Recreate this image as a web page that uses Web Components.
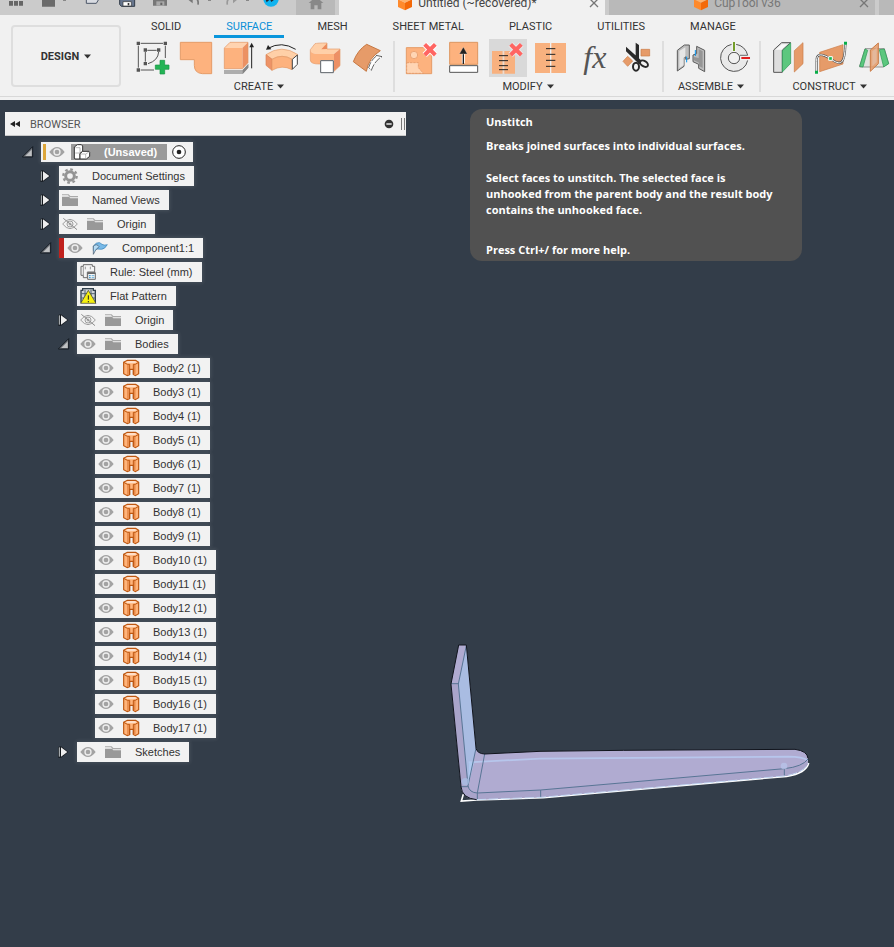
<!DOCTYPE html>
<html lang="en">
<head>
<meta charset="utf-8">
<title>Untitled (~recovered)*</title>
<style>
html,body{height:100%;margin:0}
body{font-family:Roboto,"Liberation Sans",sans-serif;font-size:11px;color:#333;background:#333d49}
</style>
</head>
<body>
<cad-app></cad-app>
<script>
const ICONS = {
  sketch: ['12 15 114 114', `<g fill="none" stroke="#555" stroke-width="3"><path d="M32 28H99M25 35V101M106 35V72M32 108H72M52 49H80M46 54V83M86 54Q84 80 54 89"/></g><g fill="#555"><path d="M20 23h10v10H20zM101 23h10v10h-10zM20 103h10v10H20zM41 43h10v10H41zM81 43h10v10H81zM41 84h10v10H41z"/></g><path d="M90 79h14v14h13v13h-13v14H90v-14H76V93h14z" fill="#23b455" stroke="#169443" stroke-width="2"/>`],
  patch: ['141 15 114 114', `<path d="M151 25H245V119H217Q193 117 193 94V77H151z" fill="#fdb27e" stroke="#e59c68" stroke-width="3"/>`],
  extrude: ['270 15 114 114', `<path d="M282 108H338L355 90V101L338 120H282z" fill="#aeaeae"/><path d="M338 108L355 90V101L338 120z" fill="#858585"/><path d="M283 42L300 25H354L337 42z" fill="#ffd3b0"/><path d="M337 42L354 25V86L337 104z" fill="#ec9163"/><path d="M283 42H337V104H283z" fill="#fdb27e"/><path d="M283 42L300 25H354V86L337 104H283z" fill="none" stroke="#e0935f" stroke-width="2"/><path d="M365 35V103" stroke="#222" stroke-width="3"/><path d="M365 26L358 40H372z" fill="#222"/>`],
  revolve: ['9 15 114 114', `<path d="M18 62Q65 29 114 62L97 76Q66 58 36 76z" fill="#ffd0a8" stroke="#e39a68" stroke-width="2"/><path d="M18 62L36 76V109L18 94z" fill="#ed9367" stroke="#d98152" stroke-width="2"/><path d="M36 76Q66 58 96 76V107Q66 91 36 109z" fill="#fdb27e" stroke="#e39a68" stroke-width="2"/><path d="M97 76L112 63V91L97 106z" fill="#fff" stroke="#444" stroke-width="3"/><path d="M24 43Q65 20 107 46" fill="none" stroke="#222" stroke-width="3"/><path d="M18 47L24 33L34 46z" fill="#222"/>`],
  loft: ['138 15 114 114', `<path d="M151 47L165 29Q171 27 201 27V45H240L222 60H177Q151 60 151 47z" fill="#ffd0a8"/><path d="M151 48Q151 60 177 60H222V79H181V90Q151 91 151 78z" fill="#fdb27e"/><path d="M184 46L201 28V45z" fill="#ec8a5b"/><path d="M222 60L240 45V95L222 112z" fill="#ed9065"/><path d="M151 47L165 29Q171 27 201 27V45H240V95L222 112M151 47V78Q151 91 181 90" fill="none" stroke="#e69a68" stroke-width="2"/><path d="M182 80H220V116H182z" fill="#fff" stroke="#5b6066" stroke-width="3"/>`],
  offset: ['267 15 114 114', `<path d="M341 66L366 69Q344 82 334 109L321 101Q328 80 341 66z" fill="#fff"/><path d="M320 31L361 50Q326 72 319 112L280 83Q293 48 320 31z" fill="#e69b69" stroke="#c67843" stroke-width="3"/><path d="M348 64L366 68Q344 80 334 109L326 101Q332 79 349 66" fill="#fff" stroke="#444" stroke-width="2.5" stroke-dasharray="22 4"/>`],
  trim: ['9 15 114 114', `<path d="M19 41H95V119H19z" fill="#fdb27e" stroke="#e59c68" stroke-width="3"/><path d="M20 86H55V101L70 118H20z" fill="#ffd5b4" stroke="#df9360" stroke-width="2" stroke-dasharray="7 3"/><circle cx="42" cy="63" r="11" fill="#ffd5b4" stroke="#df9360" stroke-width="2"/><path d="M74 31L106 63M106 31L74 63" stroke="#fff" stroke-width="18"/><path d="M74 31L106 63M106 31L74 63" stroke="#ff6562" stroke-width="12"/>`],
  extend: ['138 15 114 114', `<path d="M149 25H233V91H149z" fill="#fdb27e" stroke="#dd965f" stroke-width="3"/><path d="M190 52V88" stroke="#fff" stroke-width="9"/><path d="M190 55V90" stroke="#222" stroke-width="4"/><path d="M190 39L178 60H202z" fill="#222" stroke="#ffe2cc"/><path d="M149 95H233V115H149z" fill="#fff" stroke="#555" stroke-width="3"/>`],
  unstitch: ['267 15 114 114', `<path d="M276 51H308V119H276zM313 51H345V119H313z" fill="#f8b17f"/><path d="M310 51V119" stroke="#f7ddc9" stroke-width="3"/><path d="M297 65H324M297 80H324M297 95H324M297 107H324" stroke="#222" stroke-width="3"/><path d="M332 31L364 63M364 31L332 63" stroke="#e9e9e9" stroke-width="18"/><path d="M332 31L364 63M364 31L332 63" stroke="#ff6562" stroke-width="12"/>`],
  stitch: ['6 15 114 114', `<path d="M15 27H60V117H15zM64 27H108V117H64z" fill="#f8b17f"/><path d="M48 44H76M48 61H76M48 79H76M48 97H76" stroke="#222" stroke-width="3"/>`],
  fx: ['135 15 114 114', `<text x="160" y="102" font-family="Liberation Serif" font-style="italic" font-size="96" fill="#555">fx</text>`],
  cut: ['264 15 114 114', `<path d="M333 46H359V66H333zM279 82L293 67L308 81L293 97z" fill="#e69b69" stroke="#ca7c47" stroke-width="2"/><path d="M288 38L330 76L336 84L328 91L288 52zM317 26L327 33V81H317z" fill="#2a2a2a"/><g fill="#f3f3f3" stroke="#2a2a2a" stroke-width="6"><ellipse cx="318" cy="98" rx="9" ry="12"/><ellipse cx="342" cy="89" rx="13" ry="8" transform="rotate(32 342 89)"/></g>`],
  joint: ['234 117 114 114', `<g stroke="#5b5b5b" stroke-width="3" stroke-linejoin="round"><path d="M250 151L271 135H286V176L275 178V170L270 172V199L250 213z" fill="#bdbdbd"/><path d="M256 153L274 142V170L269 173V196L256 204z" fill="#e6e6e6" stroke="none"/><path d="M308 139L332 151V215L314 205V193L297 185V165L308 161z" fill="#bdbdbd"/><path d="M314 147L326 154V204L315 198V188L300 181V171L314 174z" fill="#969696" stroke="none"/></g><path d="M278 170V187M304 150V168" stroke="#0793ed" stroke-width="3"/>`],
  asbuilt: ['363 117 114 114', `<circle cx="420" cy="174" r="29" fill="none" stroke="#e9e9e9" stroke-width="24"/><g fill="none" stroke="#555" stroke-width="3"><circle cx="420" cy="174" r="17"/><path d="M426 133A41 41 0 0 1 461 166H438M461 181A41 41 0 1 1 413 133"/></g><path d="M420 122V156" stroke="#f1f1f1" stroke-width="13"/><path d="M420 126V153" stroke="#749d2a" stroke-width="6"/><path d="M438 174H469" stroke="#f1f1f1" stroke-width="13"/><path d="M442 174H468" stroke="#e02020" stroke-width="6"/>`],
  plane: ['525 117 114 114', `<path d="M539 150L563 128H590L565 150V217H539z" fill="#dedede" stroke="#555" stroke-width="3"/><path d="M545 149L563 133H580L563 149z" fill="#fafafa"/><path d="M565 152L590 129V190L565 216z" fill="#5cc77e" stroke="#269653" stroke-width="2"/><path d="M601 152L627 128V191L601 216z" fill="#e69b69" stroke="#c97a45" stroke-width="2"/>`],
  planepath: ['654 117 114 114', `<path d="M677 157L747 134V192L677 215z" fill="#e69b69" stroke="#cb7b47" stroke-width="2"/><path d="M668 215V184C666 159 684 160 709 176C740 198 752 195 754 134" fill="none" stroke="#555" stroke-width="7"/><path d="M668 215V184C666 159 684 160 709 176C740 198 752 195 754 134" fill="none" stroke="#fff" stroke-width="3"/><path d="M663 212h9v9h-9zM750 125h9v9h-9z" fill="#08ad48"/><path d="M704 170h11v11h-11z" fill="#14b852" stroke="#fff" stroke-width="3"/>`],
  midplane: ['783 117 114 114', `<path d="M797 198L813 146H871L884 191L867 201H797z" fill="#e1e3df" stroke="#666" stroke-width="2"/><path d="M797 199L813 147L821 151L807 201zM856 149L871 147L884 191L869 201z" fill="#5cc77e" stroke="#259952" stroke-width="2"/><path d="M829 150L853 129V191L829 214z" fill="#e69b69" fill-opacity=".85" stroke="#ca7c47" stroke-width="3"/><path d="M835 154L848 143V186L835 199z" fill="#e2c1aa" fill-opacity=".7"/>`],
  eye: ['198 27 54 54', `<path d="M202 54Q225 24 248 54Q225 84 202 54z" fill="#a3a3a3"/><circle cx="225" cy="54" r="9" fill="none" stroke="#eee" stroke-width="4"/>`],
  eyeoff: ['183 333 54 54', `<g fill="none" stroke="#8e8e8e" stroke-width="2.5"><path d="M188 360Q210 332 232 360Q210 388 188 360z"/><circle cx="210" cy="360" r="9"/><circle cx="210" cy="360" r="3"/><path d="M190 343L231 377" stroke-width="3"/></g>`],
  folder: ['183 262 54 54', `<path d="M186 272H206L211 277H234V281H209L204 275H186z" fill="#aaa"/><path d="M186 279H207L211 284H234V307H186z" fill="#999"/>`],
  gear: ['183 189 54 54', `<circle cx="210" cy="216" r="13" fill="none" stroke="#949494" stroke-width="9"/><circle cx="210" cy="216" r="20" fill="none" stroke="#949494" stroke-width="7" stroke-dasharray="8 7.7"/>`],
  cubes: ['219 117 54 54', `<g fill="#fff" stroke="#333" stroke-width="3" stroke-linejoin="round"><path d="M223 129L232 122H244L248 126V142L240 148V165H225L223 162z"/><path d="M240 149L248 142H267L269 145V157L259 165H240z"/></g><path d="M226 131H240V146M226 147H240M242 150H257V163M258 149L266 145" stroke="#999" fill="none" stroke-width="2"/>`],
  flag: ['270 27 54 54', `<path d="M277 48Q286 36 296 38L303 43Q309 47 319 44Q311 58 301 58Q289 54 277 62z" fill="#78b9e7" stroke="#3780b5" stroke-width="2"/><path d="M277 48Q288 40 294 50L284 60L277 73z" fill="#b5dcf5" stroke="#3f5366" stroke-width="2"/>`],
  rule: ['237 99 54 54', `<g fill="#f4f4f4" stroke="#6c6c6c" stroke-width="3"><path d="M250 109V104H277V109H284V126H262V143H250V136H243V109z"/><path d="M250 110V135M256 110V118M271 110V118" stroke-width="2"/><path d="M263 128H286V148H263z"/></g><path d="M263 130H286" stroke="#666" stroke-width="4"/><path d="M267 137H272M267 143H272" stroke="#248ecc" stroke-width="3"/><path d="M275 137H283M275 143H283" stroke="#248ecc" stroke-width="2"/>`],
  flat: ['237 171 54 54', `<path d="M248 176H280V181H286V216H243V181H248z" fill="#cdd2d6" stroke="#31404c" stroke-width="4"/><path d="M243 191H286M243 204H286M255 179V213M273 179V213" stroke="#536473" stroke-width="3"/><path d="M265 181L288 220H242z" fill="#f4ef10" stroke="#333" stroke-width="2"/><path d="M265 196V209M265 213V217" stroke="#222" stroke-width="3"/>`],
  body: ['366 387 54 54', `<path d="M371 397L382 391H407L416 397V431L406 437L400 433V418H389V434L382 437L371 431z" fill="#ffb47a" stroke="#bd5711" stroke-width="3.5"/><path d="M384 404V435M404 404V435" stroke="#e88a49" stroke-width="5"/><path d="M371 397L382 403H389V434M416 397L406 403H400V433" fill="none" stroke="#bd5711" stroke-width="3"/><path d="M376 397L384 393H404L411 397L403 400H384z" fill="#ffdfc8"/>`],
  open: ['66 126 36 36', `<path d="M98 128V159H67z" fill="#777b80" stroke="#121820" stroke-width="3"/><path d="M95 137V156H76z" fill="#bfc1c3"/>`],
  closed: ['120 199 36 36', `<path d="M121 202L129 200L151 217L129 234H121z" fill="#15191e"/><path d="M129 203L148 217L129 231z" fill="#eee"/><path d="M124 203V231" stroke="#c2c7cb" stroke-width="3"/>`],
  target: ['0 0 54 54', `<circle cx="27" cy="27" r="19" fill="#fff" stroke="#222" stroke-width="3"/><circle cx="27" cy="27" r="7" fill="#222"/>`],
  rewind: ['0 0 36 36', `<path d="M18 9V27L3 18zM33 9V27L18 18z" fill="#222"/>`],
  minus: ['0 0 36 36', `<circle cx="18" cy="18" r="13" fill="#333"/><path d="M10 18H26" stroke="#fff" stroke-width="4"/>`],
  caret: ['0 0 18 18', `<path d="M0 4H18L9 14z" fill="#333"/>`],
  cube: ['0 0 48 48', `<path d="M3 13L24 3L45 13L24 23z" fill="#ffb36e"/><path d="M3 13L24 23V46L3 36z" fill="#ff8a2c"/><path d="M24 23L45 13V36L24 46z" fill="#f46908"/>`],
  close: ['0 0 30 30', `<path d="M3 3L27 27M27 3L3 27" stroke="#777" stroke-width="4"/>`],
  house: ['0 0 48 48', `<path d="M24 5L2 24H8V43H19V31H29V43H40V24H46z" fill="#888"/>`],
  apps: ['15 -45 66 66', `<path d="M27-12h12v12H27zM42-12h12v12H42zM57-12h12v12H57zM27 3h12v14H27zM42 3h12v14H42zM57 3h12v14H57z" fill="#666"/>`],
  file: ['111 -45 66 66', `<path d="M126-20H152L165-8V20H126z" fill="#6b6b6b"/>`],
  folderopen: ['249 -45 66 66', `<path d="M259-25H279L285-18H296V-7M259-25V10H289L301-10H272z" fill="#d9dce2" stroke="#4c5768" stroke-width="3"/>`],
  save: ['348 -45 66 66', `<path d="M359-25H397L404-18V19H364L359 13z" fill="#66758d" stroke="#323c49" stroke-width="3"/><path d="M369 5H394V18H369z" fill="#fff" stroke="#333" stroke-width="2"/><path d="M383 9H388V16H383z" fill="#333"/><path d="M368-20H394V-2H368z" fill="#d6dbe2"/>`],
  saveoff: ['447 -45 66 66', `<path d="M459-25H495L501-18V17H459z" fill="#777"/><path d="M469 4H493V17H469z" fill="#aaa"/><path d="M481 8H487V15H481z" fill="#666"/>`],
  undo: ['546 -45 66 66', `<path d="M568-4Q598-12 594 14" fill="none" stroke="#777" stroke-width="5"/><path d="M562-3L578-14V10z" fill="#777"/>`],
  redo: ['660 -45 66 66', `<path d="M708-4Q678-12 682 14" fill="none" stroke="#999" stroke-width="5"/><path d="M714-3L699-14V10z" fill="#999"/>`],
  ext: ['780 -45 66 66', `<circle cx="813" cy="-3" r="23" fill="#11b3ef"/><path d="M795-6L800 7L810-2L814 6L832-8z" fill="#252b33"/>`]
};
const icon = (n, s = 18) => { const [v, b] = ICONS[n]; return `<svg width="${s}" height="${s}" viewBox="${v}" aria-hidden="true">${b}</svg>`; };
const RESET = `*{box-sizing:border-box}svg{display:block;flex:none}button{font:inherit;color:inherit;background:none;border:0;padding:0;margin:0;cursor:pointer;white-space:nowrap}`;
const define = (name, css, html) => customElements.define(name, class extends HTMLElement {
  constructor() {
    super();
    this.attachShadow({ mode: 'open' }).innerHTML = `<style>${RESET}${css}</style>` + (typeof html === 'function' ? html(this) : html);
  }
});

define('quick-bar', `:host{display:grid;grid-template-columns:32px 46px 33px 33px 33px 38px 40px 22px;padding:0 0 8px 5px;width:296px;flex:none;align-items:end}
  button{display:flex;align-items:end;height:22px}i{width:3px;height:2px;background:#888;margin:0 0 6px 4px}`,
  [['apps','Data panel'],['file','File',1],['folderopen','Open'],['save','Save'],['saveoff','Save as'],['undo','Undo',1],['redo','Redo',1],['ext','Extensions']]
    .map(([n, l, c]) => `<button aria-label="${l}">${icon(n, 22)}${c ? '<i></i>' : ''}</button>`).join(''));

define('doc-tab', `:host{display:flex;flex:0 0 266px;align-items:center;height:24px;padding:0 6px;font-size:12px;line-height:24px;background:#b9b9b9;color:#777}
  :host([active]){background:#f1f1f1;color:#444}.title{flex:1;display:flex;justify-content:center;align-items:center;gap:5px;white-space:nowrap}`,
  `<div class="title">${icon('cube', 16)}<span><slot></slot></span></div><button aria-label="Close tab">${icon('close', 10)}</button>`);

define('tab-strip', `:host{display:flex;height:15px;overflow:hidden;align-items:flex-end;background:#cbcbcb;gap:4px}
  .home{flex:none;width:39px;height:24px;background:#b9b9b9;display:grid;place-items:center;margin-left:-4px}
  .rest{flex:1;height:24px;background:#b9b9b9}`,
  `<quick-bar></quick-bar><button class="home" aria-label="Home">${icon('house', 16)}</button><doc-tab active>Untitled (~recovered)*</doc-tab><doc-tab>CupTool v36</doc-tab><div class="rest"></div>`);

define('ribbon-tab', `:host{display:block}button{display:block;padding:0 12px;height:23px;line-height:23px;border-bottom:3px solid transparent}
  :host([active]) button{color:#0a8fd8;border-color:#0a96dc}`, `<button role="tab"><slot></slot></button>`);

define('tool-button', `:host{display:block}button{display:block;width:38px;height:38px}:host([active]) button{background:#d9d9d9}`,
  el => `<button aria-label="${el.getAttribute('icon')}">${icon(el.getAttribute('icon'), 38)}</button>`);

define('tool-group', `:host{display:flex;flex:none;flex-direction:column;padding:0 6px 0 8px;position:relative}
  .tools{display:flex;gap:5px}.label{align-self:center;display:flex;align-items:center;gap:4px;height:18px;padding-right:3px}
  :host(:not([last]))::after{content:"";position:absolute;right:-2px;top:2px;height:51px;width:2px;background:#dedede}:host(:not([last])){margin-right:2px}`,
  el => `<div class="tools"><slot></slot></div><button class="label">${el.getAttribute('label')}${icon('caret', 7)}</button>`);

const group = (label, tools, last = '') => `<tool-group label="${label}" ${last}>${tools.map(t => `<tool-button icon="${t}" ${t === 'unstitch' ? 'active' : ''}></tool-button>`).join('')}</tool-group>`;
define('tool-ribbon', `:host{display:flex;height:85px;background:#f1f1f1;overflow:hidden;position:relative}
  :host::after{content:"";position:absolute;left:0;right:0;bottom:3px;height:1px;background:#d8d8d8}
  .design{flex:none;width:110px;height:62px;margin:10px 5px 0 11px;border:2px solid #dedede;border-radius:4px;font-weight:700;display:flex;justify-content:center;align-items:center;gap:5px;color:#333}
  .tabs{display:flex;gap:21px;padding-left:13px;height:24px}.groups{display:flex}`,
  `<button class="design">DESIGN${icon('caret', 7)}</button><div><div class="tabs" role="tablist">
  ${['SOLID','SURFACE','MESH','SHEET METAL','PLASTIC','UTILITIES','MANAGE'].map(t => `<ribbon-tab ${t === 'SURFACE' ? 'active' : ''}>${t}</ribbon-tab>`).join('')}</div><div class="groups">
  ${group('CREATE', ['sketch','patch','extrude','revolve','loft','offset'])}${group('MODIFY', ['trim','extend','unstitch','stitch','fx','cut'])}${group('ASSEMBLE', ['joint','asbuilt'])}${group('CONSTRUCT', ['plane','planepath','midplane'], 'last')}</div></div>`);

define('tree-row', `:host{display:flex;align-items:center;height:20px;width:max-content}
  .exp{width:12px;margin-right:7px}.pill{display:flex;align-items:center;height:20px;background:#f2f2f2;padding:0 9px 0 2px;box-shadow:0 0 4px 1px #ffffff1c;white-space:nowrap}
  .bar{width:5px;height:20px;margin-left:-2px;margin-right:2px}.eye{margin-right:7px}.name{margin-left:13px;color:#333}
  .root{display:flex;align-items:center;height:16px;background:#999;padding:0 10px 0 2px;margin:0 3px 0 -2px}.root .name{color:#fff;font-weight:700}
  :host([bar="root"]) .pill{padding-right:5px}:host([bar="root"]) .bar{border:solid #f2f2f2;border-width:2px 0 2px 2px;background:#dda63a}:host([bar="component"]) .bar{background:#c0211d}`,
  el => {
    const a = n => el.getAttribute(n), root = a('bar') === 'root';
    el.style.paddingLeft = `${18 * a('level')}px`;
    const body = `${icon(a('icon'))}<span class="name"><slot></slot></span>`;
    return `${a('exp') ? `<button class="exp" aria-label="Toggle">${icon(a('exp'), 12)}</button>` : '<span class="exp"></span>'}
    <div class="pill">${a('bar') ? '<span class="bar"></span>' : ''}${a('eye') ? `<button class="eye" aria-label="Visibility">${icon(a('eye'))}</button>` : ''}${root ? `<div class="root">${body}</div><button aria-label="Activate">${icon('target')}</button>` : body}</div>`;
  });

const row = (text, level, ic, eye = '', exp = '', bar = '') => `<tree-row level="${level}" icon="${ic}" eye="${eye}" exp="${exp}" bar="${bar}">${text}</tree-row>`;
define('browser-panel', `:host{display:block;width:401px;max-width:100%;font-family:"Liberation Sans",Arial,sans-serif}
  header{display:flex;align-items:center;height:24px;background:#f2f2f2;padding:1px 1px 0 4px;border-bottom:1px solid #c8c8c8;color:#555;font-family:Roboto,sans-serif}
  header span{flex:1;margin-left:9px}.grip{width:4px;height:12px;border:solid #777;border-width:0 1px;margin-left:6px}
  .tree{display:flex;flex-direction:column;gap:4px;padding:6px 0 0 17px}`,
  `<header><button aria-label="Collapse">${icon('rewind', 12)}</button><span>BROWSER</span><button aria-label="Hide">${icon('minus', 12)}</button><div class="grip"></div></header><div class="tree">
  ${row('(Unsaved)', 0, 'cubes', 'eye', 'open', 'root')}${row('Document Settings', 1, 'gear', '', 'closed')}${row('Named Views', 1, 'folder', '', 'closed')}${row('Origin', 1, 'folder', 'eyeoff', 'closed')}
  ${row('Component1:1', 1, 'flag', 'eye', 'open', 'component')}${row('Rule: Steel (mm)', 2, 'rule')}${row('Flat Pattern', 2, 'flat')}${row('Origin', 2, 'folder', 'eyeoff', 'closed')}${row('Bodies', 2, 'folder', 'eye', 'open')}
  ${Array.from({ length: 16 }, (_, i) => row(`Body${i + 2} (1)`, 3, 'body', 'eye')).join('')}${row('Sketches', 2, 'folder', 'eye', 'closed')}</div>`);

define('tool-tip', `:host{position:absolute;left:470px;top:9px;box-sizing:border-box;width:332px;padding:5px 16px 3px;border-radius:12px;background:#515151;color:#fff;font:700 11px/16px "Open Sans","Noto Sans",sans-serif}
  p{margin:0 0 16px}.t{margin-bottom:8px}.b{margin-bottom:24px}.h{margin:0}`,
  `<p class="t">Unstitch</p><p>Breaks joined surfaces into individual surfaces.</p><p class="b">Select faces to unstitch. The selected face is<br>unhooked from the parent body and the result body<br>contains the unhooked face.</p><p class="h">Press Ctrl+/ for more help.</p>`);

define('part-model', `:host{position:absolute;left:440px;top:535px}`,
  `<svg width="380" height="180" viewBox="0 0 1140 540" role="img" aria-label="Sheet metal part">
  <path d="M70 478L64 498L110 495L310 488L1040 424Q1098 415 1106 384" fill="none" stroke="#fff" stroke-width="5"/>
  <path d="M56 30H79L108 340Q112 356 134 357L300 349L550 346L1065 343Q1102 348 1104 370V384Q1098 411 1035 423L305 487L110 494Q66 490 63 455L33 147z" fill="#b0abd1"/>
  <path d="M33 147H55L84 452Q88 473 112 474L302 465L1033 401Q1080 397 1104 372V384Q1098 411 1035 423L305 487L110 494Q66 490 63 455z" fill="#a9a4ca"/>
  <path d="M79 32L108 340L90 425L84 452L55 147z" fill="#a9bce2"/>
  <path d="M86 382L300 371L1045 365Q1088 366 1103 376" fill="none" stroke="#b7c6ec" stroke-width="5"/>
  <path d="M88 380H103L84 452z" fill="#aec9ef"/>
  <g fill="none" stroke="#587595" stroke-width="3"><path d="M79 32L55 147L84 452Q88 473 112 474L302 465L1033 401Q1088 395 1104 372M33 146H55M108 340L84 452M134 357L112 474V494M302 465V487M1033 401V423M63 455H84"/></g>
  <path d="M110 494L305 487L1035 423Q1098 411 1104 384" fill="none" stroke="#c7dcf5" stroke-width="3" stroke-dasharray="28 8"/>
  <path d="M110 494Q66 490 63 455L33 147L56 30H79L108 340Q112 356 134 357L300 349L550 346L1065 343Q1102 348 1104 370" fill="none" stroke="#10141c" stroke-width="3"/>
  <circle cx="76" cy="440" r="11" fill="#a9bde2" opacity=".8"/><circle cx="1032" cy="393" r="10" fill="#b8c3e8" opacity=".8"/></svg>`);

define('cad-app', `:host{display:flex;flex-direction:column;min-height:100%}main{flex:1;position:relative;padding:12px 5px;background:#333d49}`,
  `<tab-strip></tab-strip><tool-ribbon></tool-ribbon><main><browser-panel></browser-panel><part-model></part-model><tool-tip role="tooltip"></tool-tip></main>`);
</script>
</body>
</html>
